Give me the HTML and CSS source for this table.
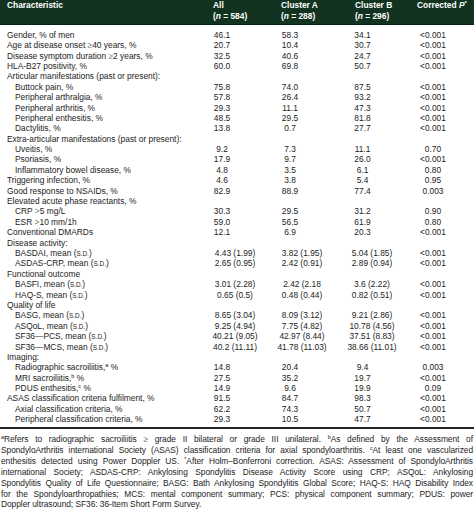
FILE: index.html
```html
<!DOCTYPE html>
<html>
<head>
<meta charset="utf-8">
<link rel="stylesheet" href="styles.css">
</head>
<body>
<div class="head">
<div class="h0">Characteristic</div>
<div class="h1">All<br>(<i>n</i> = 584)</div>
<div class="h2">Cluster A<br>(<i>n</i> = 288)</div>
<div class="h3">Cluster B<br>(<i>n</i> = 296)</div>
<div class="h4">Corrected <i>P</i><span class="hs">*</span></div>
</div>
<div class="body">
<div class="row s"><span>Gender, % of men</span><span>46.1</span><span>58.3</span><span>34.1</span><span>&lt;0.001</span></div>
<div class="row s"><span>Age at disease onset <span class="op">≥</span>40 years, %</span><span>20.7</span><span>10.4</span><span>30.7</span><span>&lt;0.001</span></div>
<div class="row s"><span>Disease symptom duration <span class="op">≥</span>2 years, %</span><span>32.5</span><span>40.6</span><span>24.7</span><span>&lt;0.001</span></div>
<div class="row s"><span>HLA-B27 positivity, %</span><span>60.0</span><span>69.8</span><span>50.7</span><span>&lt;0.001</span></div>
<div class="row s"><span>Articular manifestations (past or present):</span><span></span><span></span><span></span><span></span></div>
<div class="row s in"><span>Buttock pain, %</span><span>75.8</span><span>74.0</span><span>87.5</span><span>&lt;0.001</span></div>
<div class="row s in"><span>Peripheral arthralgia, %</span><span>57.8</span><span>26.4</span><span>93.2</span><span>&lt;0.001</span></div>
<div class="row s in"><span>Peripheral arthritis, %</span><span>29.3</span><span>11.1</span><span>47.3</span><span>&lt;0.001</span></div>
<div class="row s in"><span>Peripheral enthesitis, %</span><span>48.5</span><span>29.5</span><span>81.8</span><span>&lt;0.001</span></div>
<div class="row s in"><span>Dactylitis, %</span><span>13.8</span><span>0.7</span><span>27.7</span><span>&lt;0.001</span></div>
<div class="row s"><span>Extra-articular manifestations (past or present):</span><span></span><span></span><span></span><span></span></div>
<div class="row s in"><span>Uveitis, %</span><span>9.2</span><span>7.3</span><span>11.1</span><span>0.70</span></div>
<div class="row s in"><span>Psoriasis, %</span><span>17.9</span><span>9.7</span><span>26.0</span><span>&lt;0.001</span></div>
<div class="row s in"><span>Inflammatory bowel disease, %</span><span>4.8</span><span>3.5</span><span>6.1</span><span>0.80</span></div>
<div class="row s"><span>Triggering infection, %</span><span>4.6</span><span>3.8</span><span>5.4</span><span>0.95</span></div>
<div class="row s"><span>Good response to NSAIDs, %</span><span>82.9</span><span>88.9</span><span>77.4</span><span>0.003</span></div>
<div class="row s"><span>Elevated acute phase reactants, %</span><span></span><span></span><span></span><span></span></div>
<div class="row s in"><span>CRP <span class="op">&gt;</span>5 mg/L</span><span>30.3</span><span>29.5</span><span>31.2</span><span>0.90</span></div>
<div class="row s in"><span>ESR <span class="op">&gt;</span>10 mm/1h</span><span>59.0</span><span>56.5</span><span>61.9</span><span>0.80</span></div>
<div class="row s"><span>Conventional DMARDs</span><span>12.1</span><span>6.9</span><span>20.3</span><span>&lt;0.001</span></div>
<div class="row s"><span>Disease activity:</span><span></span><span></span><span></span><span></span></div>
<div class="row m in"><span>BASDAI, mean (<span class="sc">s.d.</span>)</span><span>4.43 (1.99)</span><span>3.82 (1.95)</span><span>5.04 (1.85)</span><span>&lt;0.001</span></div>
<div class="row m in"><span>ASDAS-CRP, mean (<span class="sc">s.d.</span>)</span><span>2.65 (0.95)</span><span>2.42 (0.91)</span><span>2.89 (0.94)</span><span>&lt;0.001</span></div>
<div class="row s"><span>Functional outcome</span><span></span><span></span><span></span><span></span></div>
<div class="row m in"><span>BASFI, mean (<span class="sc">s.d.</span>)</span><span>3.01 (2.28)</span><span>2.42 (2.18</span><span>3.6 (2.22)</span><span>&lt;0.001</span></div>
<div class="row m in"><span>HAQ-S, mean (<span class="sc">s.d.</span>)</span><span>0.65 (0.5)</span><span>0.48 (0.44)</span><span>0.82 (0.51)</span><span>&lt;0.001</span></div>
<div class="row s"><span>Quality of life</span><span></span><span></span><span></span><span></span></div>
<div class="row m in"><span>BASG, mean (<span class="sc">s.d.</span>)</span><span>8.65 (3.04)</span><span>8.09 (3.12)</span><span>9.21 (2.86)</span><span>&lt;0.001</span></div>
<div class="row m in"><span>ASQoL, mean (<span class="sc">s.d.</span>)</span><span>9.25 (4.94)</span><span>7.75 (4.82)</span><span>10.78 (4.56)</span><span>&lt;0.001</span></div>
<div class="row m in"><span>SF36—PCS, mean (<span class="sc">s.d.</span>)</span><span>40.21 (9.05)</span><span>42.97 (8.44)</span><span>37.51 (8.83)</span><span>&lt;0.001</span></div>
<div class="row m in"><span>SF36—MCS, mean (<span class="sc">s.d.</span>)</span><span>40.2 (11.11)</span><span>41.78 (11.03)</span><span>38.66 (11.01)</span><span>&lt;0.001</span></div>
<div class="row s"><span>Imaging:</span><span></span><span></span><span></span><span></span></div>
<div class="row s in"><span>Radiographic sacroiliitis,<span class="fs">a</span> %</span><span>14.8</span><span>20.4</span><span>9.4</span><span>0.003</span></div>
<div class="row s in"><span>MRI sacroiliitis,<span class="fs">b</span> %</span><span>27.5</span><span>35.2</span><span>19.7</span><span>&lt;0.001</span></div>
<div class="row s in"><span>PDUS enthesitis,<span class="fs">c</span> %</span><span>14.9</span><span>9.6</span><span>19.9</span><span>0.09</span></div>
<div class="row s"><span>ASAS classification criteria fulfilment, %</span><span>91.5</span><span>84.7</span><span>98.3</span><span>&lt;0.001</span></div>
<div class="row s in"><span>Axial classification criteria, %</span><span>62.2</span><span>74.3</span><span>50.7</span><span>&lt;0.001</span></div>
<div class="row s in"><span>Peripheral classification criteria, %</span><span>29.3</span><span>10.5</span><span>47.7</span><span>&lt;0.001</span></div>
</div>
<div class="rule"></div>
<div class="notes">
<div class="ln"><span class="fs">a</span>Refers to radiographic sacroiliitis <span class="op">≥</span> grade II bilateral or grade III unilateral. <span class="fs">b</span>As defined by the Assessment of</div>
<div class="ln">SpondyloArthritis international Society (ASAS) classification criteria for axial spondyloarthritis. <span class="fs">c</span>At least one vascularized</div>
<div class="ln">enthesitis detected using Power Doppler US. <span class="fs">*</span>After Holm–Bonferroni correction. ASAS: Assessment of SpondyloArthritis</div>
<div class="ln">international Society; ASDAS-CRP: Ankylosing Spondylitis Disease Activity Score using CRP; ASQoL: Ankylosing</div>
<div class="ln">Spondylitis Quality of Life Questionnaire; BASG: Bath Ankylosing Spondylitis Global Score; HAQ-S: HAQ Disability Index</div>
<div class="ln">for the Spondyloarthropathies; MCS: mental component summary; PCS: physical component summary; PDUS: power</div>
<div class="ln last">Doppler ultrasound; SF36: 36-Item Short Form Survey.</div>
</div>
</body>
</html>
```
FILE: styles.css
```css
html { overflow: hidden; }
body {
  margin: 0;
  background: #ffffff;
  color: #1c1c1c;
  font-family: "Liberation Sans", Arial, sans-serif;
  font-size: 8.4px;
}
.head {
  display: grid;
  grid-template-columns: 200px 70px 64px 76px 64px;
  width: 474px;
  height: 24px;
  background: #12331f;
  border-bottom: 1px solid #0a2213;
  color: #ffffff;
  font-weight: bold;
  line-height: 11px;
}
.head .h0 { padding-left: 7px; }
.head .h1 { padding-left: 13px; }
.head .h2 { padding-left: 11px; }
.head .h3 { padding-left: 21px; }
.head .h4 { padding-left: 7px; }
.hs { font-size: 6px; position: relative; top: -3px; }

.body {
  display: grid;
  grid-auto-rows: 10.4px;
  padding-top: 4.8px;
  width: 474px;
}
.row {
  display: grid;
  grid-template-columns: 200px 70px 64px 76px 64px;
  height: 10.4px;
  line-height: 10.4px;
  white-space: nowrap;
  overflow: visible;
}
.row > span {
  display: block;
  text-align: center;
  height: 10.4px;
}
.row > span:first-child {
  text-align: left;
  padding-left: 7px;
}
.row.in > span:first-child { padding-left: 15px; }

.s > span:nth-child(2) { padding-right: 26px; }
.s > span:nth-child(3) { padding-right: 24px; }
.s > span:nth-child(4) { padding-right: 19px; }
.row > span:nth-child(5) { padding-right: 18px; }

.op { color: #777777; }
.sc { font-size: 6.4px; line-height: 1; text-transform: uppercase; }
.fs { font-size: 5.5px; line-height: 1; position: relative; top: -3px; }

.rule {
  width: 474px;
  height: 2px;
  background: #262626;
  margin-top: 2.5px;
}
.notes {
  margin-top: 5px;
  margin-left: 1px;
  width: 472px;
}
.ln {
  height: 10.9px;
  line-height: 10.9px;
  white-space: nowrap;
  text-align: justify;
  text-align-last: justify;
  letter-spacing: -0.05px;
}
.ln.last { text-align-last: left; }
```
